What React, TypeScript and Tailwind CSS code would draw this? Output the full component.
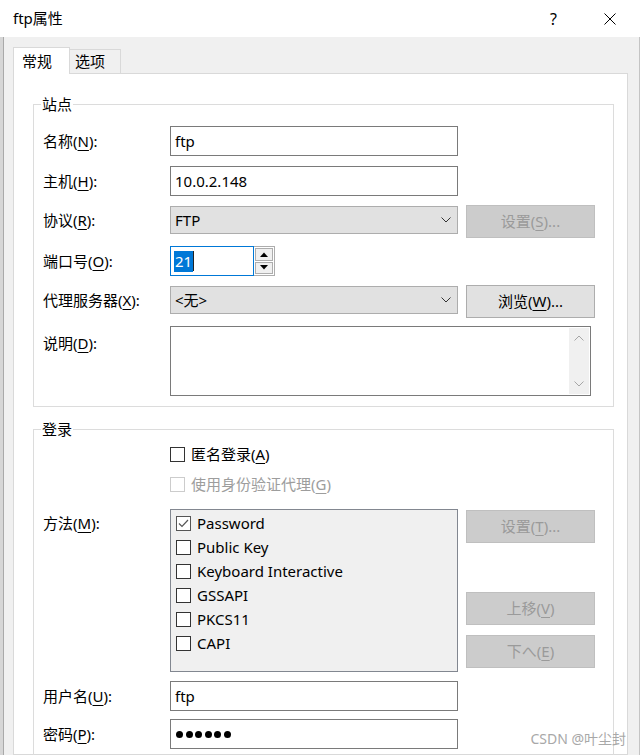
import type { ReactNode } from 'react'
import clsx from 'clsx'

const Mn = ({ children }: { children: ReactNode }) => (
  <span className="underline decoration-1 underline-offset-[3px]">{children}</span>
)

const Label = ({ children, className }: { children: ReactNode; className?: string }) => (
  <div className={clsx('w-[127px] shrink-0 text-[15px] leading-[20px] text-black', className)}>
    {children}
  </div>
)

const TextBox = ({ children }: { children?: ReactNode }) => (
  <div className="flex h-[30px] w-[288px] items-center border border-[#7a7a7a] bg-white pl-[4px] text-[15px] text-black">
    {children}
  </div>
)

const Chevron = ({ up, color = '#333333' }: { up?: boolean; color?: string }) => (
  <svg width="10" height="6" viewBox="0 0 10 6" fill="none">
    <polyline
      points={up ? '0.5,5.5 5,1 9.5,5.5' : '0.5,0.5 5,5 9.5,0.5'}
      stroke={color}
      strokeWidth="1"
    />
  </svg>
)

const Select = ({ value }: { value: string }) => (
  <div className="flex h-[28px] w-[288px] items-center justify-between border border-[#adadad] bg-[#e1e1e1] pl-[4px] pr-[6px] text-[15px] text-black">
    <span>{value}</span>
    <Chevron />
  </div>
)

const Button = ({ children, disabled }: { children: ReactNode; disabled?: boolean }) => (
  <div
    className={clsx(
      'flex h-[33px] w-[129px] items-center justify-center border text-[15px]',
      disabled
        ? 'border-[#bfbfbf] bg-[#cccccc] text-[#9a9a9a]'
        : 'border-[#adadad] bg-[#e1e1e1] text-black',
    )}
  >
    {children}
  </div>
)

const Checkbox = ({ checked, disabled }: { checked?: boolean; disabled?: boolean }) => (
  <span
    className={clsx(
      'flex h-[15px] w-[15px] shrink-0 items-center justify-center border bg-white',
      disabled ? 'border-[#cccccc]' : checked ? 'border-[#555555]' : 'border-[#333333]',
    )}
  >
    {checked && (
      <svg width="11" height="9" viewBox="0 0 11 9" fill="none">
        <polyline points="1,4.5 4,7.5 10,1" stroke="#555555" strokeWidth="1.2" />
      </svg>
    )}
  </span>
)

const Triangle = ({ up }: { up?: boolean }) => (
  <svg width="8" height="5" viewBox="0 0 8 5">
    <polygon points={up ? '0,5 4,0.5 8,5' : '0,0 8,0 4,4.5'} fill="#000000" />
  </svg>
)

const methods = ['Password', 'Public Key', 'Keyboard Interactive', 'GSSAPI', 'PKCS11', 'CAPI']

export default function App() {
  return (
    <div className="relative flex h-[755px] w-[641px] flex-col overflow-hidden bg-[#f0f0f0] font-['Noto_Sans','Noto_Sans_CJK_SC',sans-serif] text-black">
      {/* title bar */}
      <div className="flex h-[37px] shrink-0 items-center bg-white pl-[13px] pr-[25px]">
        <span className="text-[15px]">ftp属性</span>
        <span className="ml-auto mr-[47px] text-[16px]">?</span>
        <svg width="12" height="12" viewBox="0 0 12 12">
          <path d="M0.5 0.5 L11.5 11.5 M11.5 0.5 L0.5 11.5" stroke="#000" strokeWidth="1" />
        </svg>
      </div>

      <div className="flex min-h-0 flex-1">
        <div className="w-[4px] shrink-0 border-r border-[#a9a9a9] bg-[#d6d6d6]" />

        <div className="flex min-w-0 flex-1 flex-col pl-[9px] pr-[11px] pt-[10px]">
          {/* tabs */}
          <div className="flex h-[26px] shrink-0 items-end text-[15px]">
            <div className="relative z-10 -mb-px flex h-[27px] w-[57px] items-center border border-b-0 border-[#d9d9d9] bg-white pl-[8px]">
              常规
            </div>
            <div className="flex h-[24px] w-[51px] items-center border border-b-0 border-l-0 border-[#d9d9d9] bg-[#f0f0f0] pl-[5px]">
              选项
            </div>
          </div>

          {/* page */}
          <div className="min-h-0 flex-1 border border-[#d9d9d9] bg-white">
            <fieldset className="ml-[19px] mt-[20px] w-[581px] border border-[#dcdcdc] pb-[10px] pl-[9px] pt-[12px]">
              <legend className="-ml-[2px] px-px text-[15px] leading-[20px]">站点</legend>

              <div className="flex h-[30px] items-center">
                <Label>
                  名称(<Mn>N</Mn>):
                </Label>
                <TextBox>ftp</TextBox>
              </div>

              <div className="mt-[10px] flex h-[30px] items-center">
                <Label>
                  主机(<Mn>H</Mn>):
                </Label>
                <TextBox>10.0.2.148</TextBox>
              </div>

              <div className="mt-[9px] flex h-[33px] items-start gap-[8px]">
                <div className="mt-px flex items-center">
                  <Label>
                    协议(<Mn>R</Mn>):
                  </Label>
                  <Select value="FTP" />
                </div>
                <Button disabled>
                  设置(<Mn>S</Mn>)...
                </Button>
              </div>

              <div className="mt-[8px] flex h-[30px] items-center">
                <Label>
                  端口号(<Mn>O</Mn>):
                </Label>
                <div className="flex h-[30px]">
                  <div className="flex h-[30px] w-[84px] items-center border border-[#0078d7] bg-white pl-[3px] text-[15px]">
                    <span className="bg-[#0078d7] px-px leading-[21px] text-white">21</span>
                    <span className="h-[20px] w-px bg-[#222]" />
                  </div>
                  <div className="flex h-[30px] w-[21px] flex-col gap-px border border-l-0 border-[#adadad] bg-white p-px">
                    <div className="flex flex-1 items-center justify-center border border-[#adadad] bg-[#f0f0f0]">
                      <Triangle up />
                    </div>
                    <div className="flex flex-1 items-center justify-center border border-[#adadad] bg-[#f0f0f0]">
                      <Triangle />
                    </div>
                  </div>
                </div>
              </div>

              <div className="mt-[9px] flex h-[33px] items-start gap-[8px]">
                <div className="mt-px flex items-center">
                  <Label>
                    代理服务器(<Mn>X</Mn>):
                  </Label>
                  <Select value="<无>" />
                </div>
                <Button>
                  浏览(<Mn>W</Mn>)...
                </Button>
              </div>

              <div className="mt-[8px] flex h-[70px] items-start">
                <Label className="pt-[7px]">
                  说明(<Mn>D</Mn>):
                </Label>
                <div className="flex h-[70px] w-[421px] justify-end border border-[#7a7a7a] bg-white p-px">
                  <div className="flex w-[20px] flex-col justify-between bg-[#f0f0f0]">
                    <div className="flex h-[20px] items-center justify-center">
                      <Chevron up color="#a6a6a6" />
                    </div>
                    <div className="flex h-[20px] items-center justify-center">
                      <Chevron color="#a6a6a6" />
                    </div>
                  </div>
                </div>
              </div>
            </fieldset>

            <fieldset className="ml-[19px] mt-[12px] w-[581px] border border-[#dcdcdc] pb-[10px] pl-[9px] pt-[3px]">
              <legend className="-ml-[2px] px-px text-[15px] leading-[20px]">登录</legend>

              <div className="flex h-[24px] items-center pl-[127px] text-[15px]">
                <Checkbox />
                <span className="ml-[6px]">
                  匿名登录(<Mn>A</Mn>)
                </span>
              </div>

              <div className="mt-[6px] flex h-[24px] items-center pl-[127px] text-[15px] text-[#9d9d9d]">
                <Checkbox disabled />
                <span className="ml-[6px]">
                  使用身份验证代理(<Mn>G</Mn>)
                </span>
              </div>

              <div className="mt-[13px] flex items-start">
                <Label className="pt-[4px]">
                  方法(<Mn>M</Mn>):
                </Label>
                <div className="h-[163px] w-[288px] border border-[#828790] bg-[#f0f0f0] pl-[5px] pt-px text-[15px]">
                  {methods.map((m, i) => (
                    <div key={m} className="flex h-[24px] items-center">
                      <Checkbox checked={i === 0} />
                      <span className="ml-[6px]">{m}</span>
                    </div>
                  ))}
                </div>
                <div className="ml-[8px] flex flex-col pt-px">
                  <Button disabled>
                    设置(<Mn>T</Mn>)...
                  </Button>
                  <div className="mt-[49px]">
                    <Button disabled>
                      上移(<Mn>V</Mn>)
                    </Button>
                  </div>
                  <div className="mt-[10px]">
                    <Button disabled>
                      下へ(<Mn>E</Mn>)
                    </Button>
                  </div>
                </div>
              </div>

              <div className="mt-[9px] flex h-[30px] items-center">
                <Label>
                  用户名(<Mn>U</Mn>):
                </Label>
                <TextBox>ftp</TextBox>
              </div>

              <div className="mt-[8px] flex h-[30px] items-center">
                <Label>
                  密码(<Mn>P</Mn>):
                </Label>
                <div className="flex h-[30px] w-[288px] items-center gap-[2.5px] border border-[#7a7a7a] bg-white pl-[5px]">
                  {[0, 1, 2, 3, 4, 5].map((d) => (
                    <span key={d} className="h-[7px] w-[7px] rounded-full bg-black" />
                  ))}
                </div>
              </div>

              <div className="h-[40px]" />
            </fieldset>
          </div>
        </div>

        <div className="w-[2px] shrink-0 border-l border-[#c4c4c4] bg-white" />
      </div>

      <div className="absolute bottom-[6px] right-[15px] text-[14px] text-[#a8a8a8]">CSDN @叶尘封</div>
    </div>
  )
}
